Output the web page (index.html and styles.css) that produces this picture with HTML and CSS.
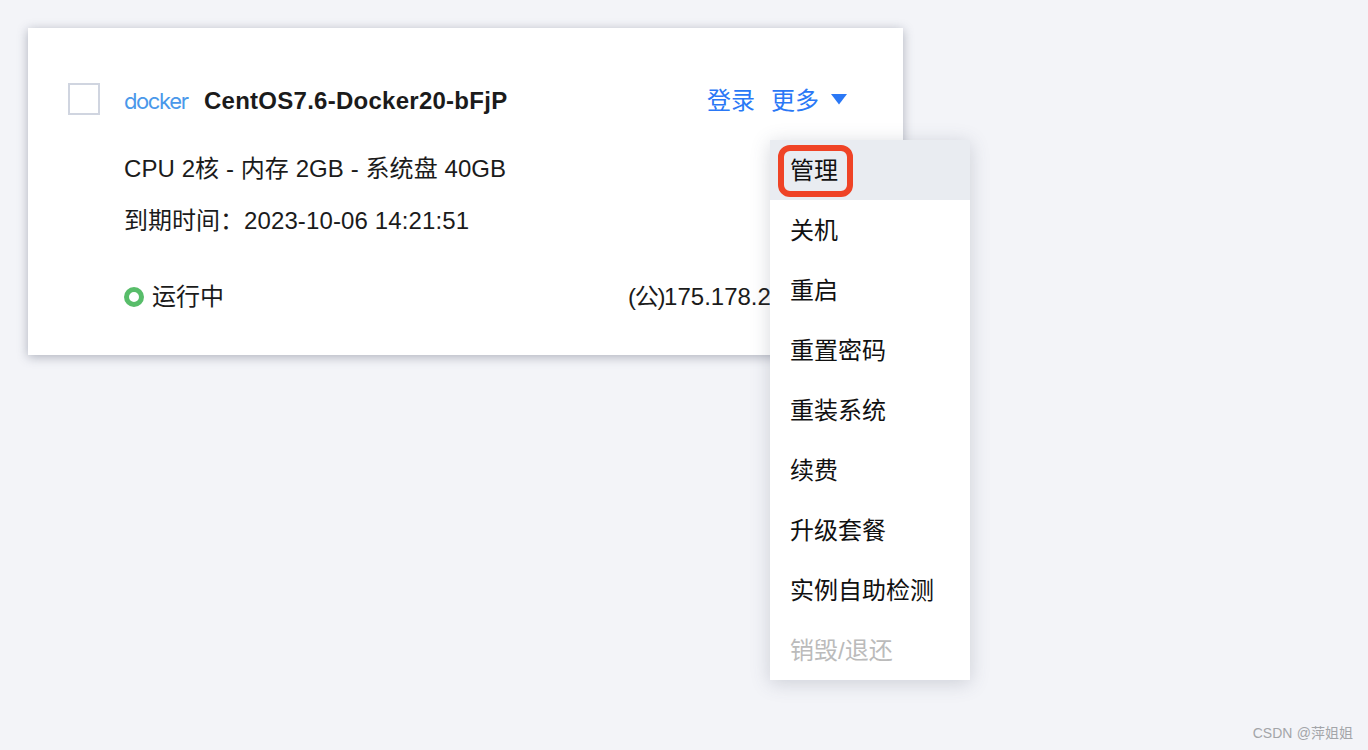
FILE: index.html
```html
<!DOCTYPE html>
<html lang="zh-CN">
<head>
<meta charset="utf-8">
<title>实例</title>
<link rel="stylesheet" href="styles.css">
</head>
<body>
<main class="card">
  <header class="head">
    <span class="check"></span>
    <span class="logo">docker</span>
    <span class="name">CentOS7.6-Docker20-bFjP</span>
    <nav class="actions">
      <a class="link">登录</a>
      <a class="link more">更多<svg class="caret" viewBox="0 0 16 11" width="16" height="11"><path d="M0 0H16L8 10.5Z" fill="#2a78f6"/></svg></a>
    </nav>
  </header>
  <div class="spec">CPU 2核 - 内存 2GB - 系统盘 40GB</div>
  <div class="expire">到期时间：<span class="time">2023-10-06 14:21:51</span></div>
  <footer class="foot">
    <span class="status"><i class="dot"></i>运行中</span>
    <span class="ip"><span class="scope">(公)</span>175.178.2</span>
  </footer>
</main>
<ul class="menu">
  <li class="item active"><span class="mark">管理</span></li>
  <li class="item">关机</li>
  <li class="item">重启</li>
  <li class="item">重置密码</li>
  <li class="item">重装系统</li>
  <li class="item">续费</li>
  <li class="item">升级套餐</li>
  <li class="item">实例自助检测</li>
  <li class="item disabled">销毁/退还</li>
</ul>
<div class="watermark">CSDN @萍姐姐</div>
</body>
</html>
```
FILE: styles.css
```css
*, *::after { box-sizing: border-box; }
html, body { height: 100%; }
body {
  margin: 0;
  padding: 28px;
  background: #f3f4f8;
  color: #1b1b1b;
  font: 24px/32px "Liberation Sans", "Noto Sans CJK SC", sans-serif;
  overflow: hidden;
}
.card {
  width: 875px;
  height: 327px;
  padding: 55px 40px 0;
  background: #fff;
  box-shadow: 0 2px 10px rgba(70, 78, 100, .4);
}
.head { display: flex; align-items: center; height: 32px; }
.check {
  width: 32px;
  height: 32px;
  border: 2px solid #d0d5e0;
  background: #fff;
}
.logo {
  margin: 3px 0 0 24px;
  width: 64px;
  color: #4a98ea;
  font: 400 22px/32px Inter, sans-serif;
  letter-spacing: -1.4px;
}
.name { margin: 4px 0 0 16px; font-weight: 700; letter-spacing: .26px; }
.actions { margin: 4px 0 0 auto; display: flex; gap: 16px; padding-right: 16px; }
.link { color: #2a78f6; }
.more { display: flex; align-items: center; }
.caret { margin-left: 12px; margin-top: -3px; }
.spec { margin: 38px 0 0 56px; letter-spacing: .08px; }
.expire { margin: 20px 0 0 56px; }
.time { letter-spacing: .12px; }
.foot { display: flex; margin: 44px 0 0 56px; }
.status { display: flex; align-items: center; }
.dot {
  width: 20px;
  height: 20px;
  margin-right: 8px;
  border: 5px solid #58bd6a;
  border-radius: 50%;
}
.ip { margin-left: 404px; white-space: nowrap; }
.scope { letter-spacing: -1.3px; }
.menu {
  position: absolute;
  left: 770px;
  top: 140px;
  width: 200px;
  margin: 0;
  padding: 0;
  list-style: none;
  background: #fff;
  box-shadow: 0 3px 18px rgba(70, 78, 100, .22);
}
.item { height: 60px; padding: 15px 20px; line-height: 32px; color: #111; }
.active { background: #e9ecf1; }
.mark { position: relative; }
.mark::after {
  content: "";
  position: absolute;
  left: -12px;
  top: -12px;
  width: 75px;
  height: 52px;
  border: 6px solid #ef4326;
  border-radius: 12px;
}
.disabled { color: #bbb; }
.watermark {
  position: absolute;
  right: 15px;
  bottom: 8px;
  color: #a3a5a9;
  font-size: 14px;
  line-height: 18px;
  word-spacing: .5px;
}
```
